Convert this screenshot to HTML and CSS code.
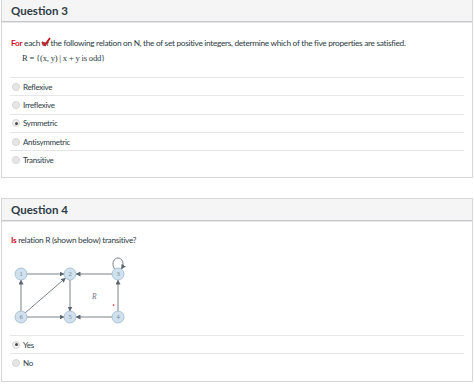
FILE: index.html
```html
<!DOCTYPE html>
<html>
<head>
<meta charset="utf-8">
<link rel="stylesheet" href="styles.css">
</head>
<body>
<div class="card card-first">
  <div class="card-header">Question 3</div>
  <div class="card-body">
    <p class="qtext"><span class="mark">For</span> each <span class="check-wrap">of<svg class="check" width="10" height="10" viewBox="0 0 10 10"><path d="M1 5 L4 8 L9 1" stroke="#d0101e" stroke-width="1.8" fill="none"/></svg></span> the following relation on N, the of set positive integers, determine which of the five properties are satisfied.</p>
    <p class="formula">R = {(x, y) | x + y is odd}</p>
    <ul class="answers">
      <li><span class="radio"></span>Reflexive</li>
      <li><span class="radio"></span>Irreflexive</li>
      <li><span class="radio checked"></span>Symmetric</li>
      <li><span class="radio"></span>Antisymmetric</li>
      <li><span class="radio"></span>Transitive</li>
    </ul>
  </div>
</div>
<div class="card">
  <div class="card-header">Question 4</div>
  <div class="card-body body-q4">
    <p class="qtext"><span class="mark">Is</span> relation R (shown below) transitive?</p>
    <svg class="graph" width="130" height="72" viewBox="0 0 130 72">
      <defs>
        <marker id="ah" markerWidth="5" markerHeight="5" refX="4.5" refY="2.5" orient="auto" markerUnits="userSpaceOnUse">
          <path d="M0 0 L5 2.5 L0 5 Z" fill="#5c6670"/>
        </marker>
      </defs>
      <g stroke="#6b747c" stroke-width="0.9" fill="none">
        <line x1="17" y1="20" x2="54" y2="20" marker-end="url(#ah)"/>
        <line x1="102" y1="20" x2="66" y2="20" marker-end="url(#ah)"/>
        <line x1="60" y1="26" x2="60" y2="57" marker-end="url(#ah)"/>
        <line x1="11" y1="57" x2="11" y2="26" marker-end="url(#ah)"/>
        <line x1="15" y1="59" x2="55.5" y2="24" marker-end="url(#ah)"/>
        <line x1="17" y1="63" x2="54" y2="63" marker-end="url(#ah)"/>
        <line x1="102" y1="63" x2="66" y2="63" marker-end="url(#ah)"/>
        <line x1="108" y1="57" x2="108" y2="26" marker-end="url(#ah)"/>
        <path d="M104.5 15 C101 9 104 4 108 4 C112 4 115 9 111.5 15" marker-end="url(#ah)"/>
      </g>
      <g fill="#cfe0ee" stroke="#9fb7cc" stroke-width="0.8">
        <circle cx="11" cy="20" r="6"/>
        <circle cx="60" cy="20" r="6"/>
        <circle cx="108" cy="20" r="6"/>
        <circle cx="11" cy="63" r="6"/>
        <circle cx="60" cy="63" r="6"/>
        <circle cx="108" cy="63" r="6"/>
      </g>
      <g class="nlabel" fill="#7a8590" text-anchor="middle">
        <text x="11" y="22.3">1</text>
        <text x="60" y="22.3">2</text>
        <text x="108" y="22.3">3</text>
        <text x="11" y="65.3">6</text>
        <text x="60" y="65.3">5</text>
        <text x="108" y="65.3">4</text>
      </g>
      <text class="rlabel" x="82" y="45" fill="#6a7580">R</text>
      <circle cx="103.5" cy="51" r="0.8" fill="#d0101e"/>
    </svg>
    <ul class="answers answers-q4">
      <li><span class="radio checked"></span>Yes</li>
      <li><span class="radio"></span>No</li>
    </ul>
  </div>
</div>
</body>
</html>
```

FILE: styles.css
```css
html, body {
  margin: 0;
  padding: 0;
  background: #ffffff;
}
body {
  font-family: Lato, "Open Sans", sans-serif;
  color: #2d3b45;
  width: 474px;
  overflow: hidden;
}
.card {
  border: 1px solid #d6d6d6;
  margin: 0 1px 20px 1px;
}
.card-first {
  border-top: none;
}
.card-header {
  height: 21px;
  background: #f5f5f5;
  border-bottom: 1px solid #c4c8cc;
  box-shadow: 0 1px 0 #e8e8e8;
  display: flex;
  align-items: center;
  padding: 0 9px;
  font-weight: bold;
  font-size: 11.5px;
  color: #2d3b45;
}
.card-body {
  padding: 15px 8px 9px 8px;
}
.qtext {
  margin: 0 0 0 1px;
  font-size: 8.3px;
  line-height: 12px;
  letter-spacing: -0.3px;
}
.mark {
  color: #d0101e;
  font-weight: bold;
}
.check-wrap {
  position: relative;
}
.check {
  position: absolute;
  left: -1px;
  top: -1px;
}
.formula {
  margin: 3px 0 0 12px;
  font-family: "Liberation Serif", serif;
  font-size: 8.6px;
  line-height: 12px;
  letter-spacing: -0.2px;
}
.answers {
  list-style: none;
  margin: 13px 0 0 0;
  padding: 0;
}
.answers li {
  height: 17.3px;
  border-top: 1px solid #e6e6e6;
  display: flex;
  align-items: center;
  font-size: 8px;
  letter-spacing: -0.3px;
  padding-left: 2px;
}
.radio {
  width: 6px;
  height: 6px;
  border-radius: 50%;
  background: #e6e6e6;
  border: 0.5px solid #d6d6d6;
  margin-right: 3px;
  display: inline-block;
  position: relative;
  flex: none;
}
.radio.checked {
  background: #f0f0f0;
}
.radio.checked::after {
  content: "";
  position: absolute;
  left: 1.5px;
  top: 1.5px;
  width: 3px;
  height: 3px;
  border-radius: 50%;
  background: #4a4a4a;
}
.body-q4 {
  padding-top: 13px;
}
.graph {
  display: block;
  margin: 8px 0 0 0;
}
.nlabel {
  font-family: "Liberation Serif", serif;
  font-size: 6.5px;
}
.rlabel {
  font-family: "Liberation Serif", serif;
  font-style: italic;
  font-size: 7.5px;
}
.answers-q4 {
  margin-top: 8.5px;
}
```
